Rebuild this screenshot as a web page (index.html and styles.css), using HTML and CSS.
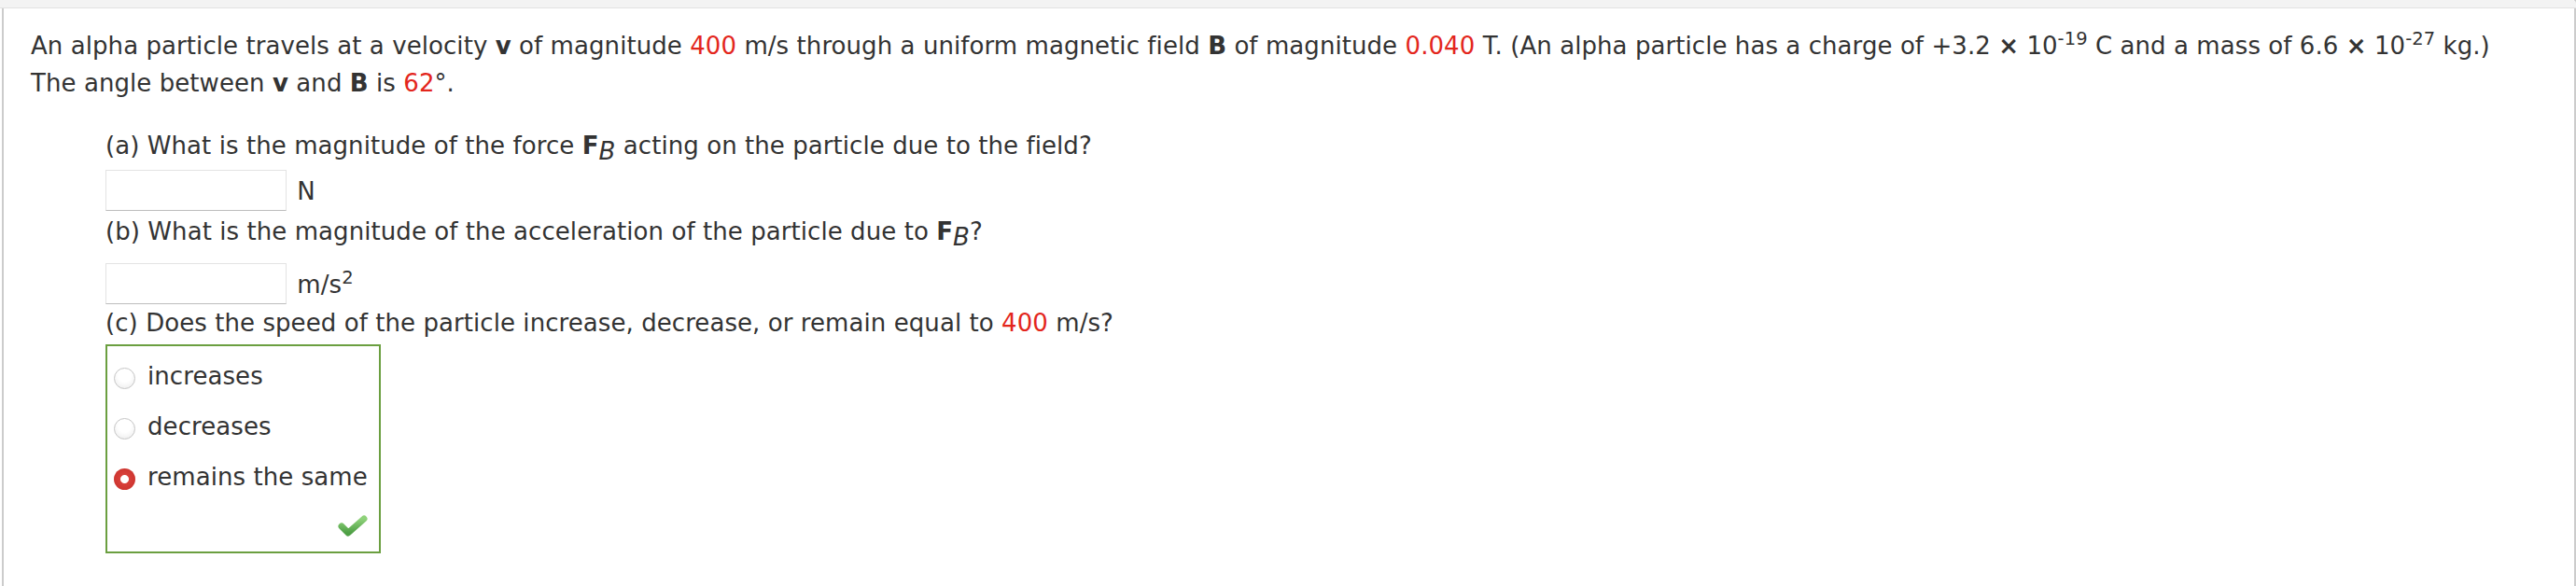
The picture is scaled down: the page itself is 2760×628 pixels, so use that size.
FILE: index.html
```html
<!DOCTYPE html>
<html>
<head>
	<meta http-equiv="Content-Type" content="text/html; charset=utf-8" />
	<title>Alpha Particle in a Magnetic Field</title>
	<link rel="stylesheet" href="styles.css">
</head>
<body>

	<div class="panel">
		<div class="panel-top"></div>

		<div class="question">
			<p class="intro">An alpha particle travels at a velocity <b>v</b> of magnitude <span class="red">400</span> m/s through a uniform magnetic field <b>B</b> of magnitude <span class="red">0.040</span> T. (An alpha particle has a charge of +3.2 <b>&times;</b> 10<sup>-19</sup> C and a mass of 6.6 <b>&times;</b> 10<sup>-27</sup> kg.)<br>The angle between <b>v</b> and <b>B</b> is <span class="red">62</span>&deg;.</p>

			<div class="part">
				<p>(a) What is the magnitude of the force <b>F</b><sub>B</sub> acting on the particle due to the field?</p>
				<div class="answer"><span class="blank"></span> N</div>

				<p>(b) What is the magnitude of the acceleration of the particle due to <b>F</b><sub>B</sub>?</p>
				<div class="answer tall"><span class="blank"></span> m/s<sup>2</sup></div>

				<p>(c) Does the speed of the particle increase, decrease, or remain equal to <span class="red">400</span> m/s?</p>
				<div class="choices">
					<div class="choice"><span class="radio"></span>increases</div>
					<div class="choice"><span class="radio"></span>decreases</div>
					<div class="choice"><span class="radio checked"></span>remains the same</div>
					<div class="mark">
						<svg width="32" height="26" viewBox="0 0 32 26">
							<defs>
								<linearGradient id="ok" x1="0" y1="0" x2="0" y2="1">
									<stop offset="0" stop-color="#8fd27a"/>
									<stop offset="1" stop-color="#4e9f45"/>
								</linearGradient>
							</defs>
							<path d="M4 13 L11 20 L28 5" fill="none" stroke="url(#ok)" stroke-width="7" stroke-linecap="round" stroke-linejoin="round"/>
						</svg>
					</div>
				</div>
			</div>
		</div>
	</div>

</body>
</html>
```

FILE: styles.css
```css
body {
	margin:0;
	font-family:Verdana, "DejaVu Sans", sans-serif;
	font-size:26px;
	line-height:40px;
	letter-spacing:0.07px;
	color:#333333;
	background:#ffffff;
}

p {margin:0;}

/* ----------- panel ----------- */
.panel {
	height:628px;
	box-sizing:border-box;
	border-left:solid 2px #cccccc;
	border-right:solid 2px #cccccc;
	margin-left:2px;
}

.panel-top {
	height:8px;
	margin:0 -2px 0 -4px;
	background:#f3f3f3;
	border-bottom:solid 1px #e2e2e2;
	border-top-right-radius:4px;
}

.question {
	padding:20px 0 0 29px;
}

.red {color:#e3261c;}

sup {
	font-size:0.75em;
	line-height:0;
	vertical-align:0.5em;
}

sub {
	font-size:1em;
	font-style:italic;
	line-height:0;
	vertical-align:-6px;
}

/* ----------- parts ----------- */
.part {
	margin:27px 0 0 80px;
}

.answer {
	margin:6px 0 2px;
}

.answer.tall {
	margin:14px 0 0;
}

.blank {
	display:inline-block;
	width:192px;
	height:42px;
	margin-right:3px;
	border:solid 1px #e3e3e3;
	border-bottom-color:#bdbdbd;
	vertical-align:-12px;
	background:#ffffff;
}

/* ----------- choices ----------- */
.choices {
	display:inline-flex;
	flex-direction:column;
	gap:14px;
	margin-top:3px;
	padding:12px 12px 14px 7px;
	border:solid 2px #6b9f40;
}

.choice {
	display:flex;
	align-items:center;
}

.radio {
	width:21px;
	height:21px;
	margin:5px 13px 0 0;
	border:solid 1px #c6c6c6;
	border-radius:50%;
	background:radial-gradient(circle at 50% 35%, #ffffff 40%, #e9e9e9);
}

.radio.checked {
	width:23px;
	height:23px;
	border:0;
	background:radial-gradient(circle, #ffffff 0, #ffffff 4px, #d8403a 5px, #c62d28);
}

.mark {
	display:flex;
	justify-content:flex-end;
	height:26px;
	margin-top:6px;
}
```
